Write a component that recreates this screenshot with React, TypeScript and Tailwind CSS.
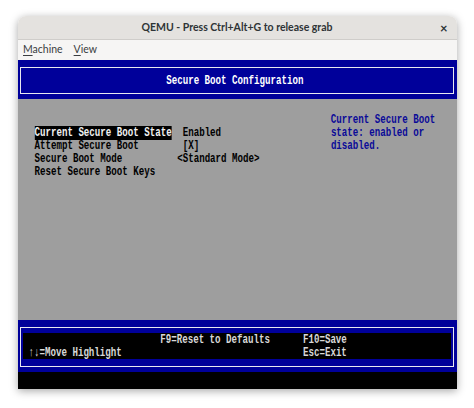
import React from "react";

type Seg = { col: number; text: string; cls?: string };

function Line({ segs, start = 0, tight = false }: { segs: Seg[]; start?: number; tight?: boolean }) {
  const out: React.ReactNode[] = [];
  let cur = start;
  segs.forEach((s, i) => {
    const gap = s.col - cur;
    if (gap > 0) out.push(<span key={"g" + i}>{" ".repeat(gap)}</span>);
    out.push(
      <span key={"s" + i} className={s.cls}>
        {s.text}
      </span>
    );
    cur = s.col + s.text.length;
  });
  return (
    <div className="h-[13.02px] flex">
      <div
        className={
          tight
            ? "w-max shrink-0 whitespace-pre origin-top-left scale-x-[0.7317] font-['Liberation_Mono',monospace] text-[12.5px] leading-[13.02px] font-bold pt-[1px]"
            : "w-max shrink-0 whitespace-pre origin-top-left scale-x-[0.7317] font-['Liberation_Mono',monospace] text-[12.5px] leading-[13.02px] font-bold pt-[2px]"
        }
      >
        {out.length ? out : " "}
      </div>
    </div>
  );
}

export default function App() {
  const body: Seg[][] = [
    [],
    [{ col: 57, text: "Current Secure Boot", cls: "text-[#0a0a98]" }],
    [
      { col: 3, text: "Current Secure Boot State", cls: "bg-black text-[#f0f0f0]" },
      { col: 30, text: "Enabled", cls: "text-black" },
      { col: 57, text: "state: enabled or", cls: "text-[#0a0a98]" },
    ],
    [
      { col: 3, text: "Attempt Secure Boot", cls: "text-black" },
      { col: 30, text: "[X]", cls: "text-black" },
      { col: 57, text: "disabled.", cls: "text-[#0a0a98]" },
    ],
    [
      { col: 3, text: "Secure Boot Mode", cls: "text-black" },
      { col: 29, text: "<Standard Mode>", cls: "text-black" },
    ],
    [{ col: 3, text: "Reset Secure Boot Keys", cls: "text-black" }],
  ];

  return (
    <div className="w-[474px] h-[408px] bg-white overflow-hidden pt-[16px] pl-[17.5px]">
      <div className="w-[439px] flex flex-col rounded-t-[8px] shadow-[0_2px_9px_rgba(0,0,0,0.35)] overflow-hidden">
        {/* Title bar */}
        <div className="h-[24px] bg-[#e4e2df] border-b border-[#cfcdca] flex items-center justify-center relative font-['Lato',sans-serif] text-[10.5px] font-bold text-[#2e3436]">
          <span>QEMU - Press Ctrl+Alt+G to release grab</span>
          <span className="absolute right-[9px] top-[3px] text-[13px] font-bold text-[#2e3436]">×</span>
        </div>
        {/* Menu bar */}
        <div className="h-[19.5px] bg-[#f6f5f4] flex items-center gap-[11px] pl-[5.5px] font-['Lato',sans-serif] text-[10.5px] text-[#3a3d3f]">
          <span>
            <span className="underline underline-offset-[2px]">M</span>achine
          </span>
          <span>
            <span className="underline underline-offset-[2px]">V</span>iew
          </span>
        </div>
        {/* Screen */}
        <div className="h-[329px] bg-black flex flex-col">
          {/* header */}
          <div className="h-[39.07px] bg-[#00009a] px-[2.2px] pt-[7px]">
            <div className="h-[27px] border border-[#e8e8f0] pt-[5px] overflow-hidden">
              <div className="-ml-[3.2px]">
                <Line segs={[{ col: 27, text: "Secure Boot Configuration", cls: "text-white" }]} />
              </div>
            </div>
          </div>
          {/* body */}
          <div className="h-[221.39px] bg-[#9e9e9e] overflow-hidden">
            {body.map((segs, i) => (
              <Line key={i} segs={segs} />
            ))}
          </div>
          {/* footer */}
          <div className="h-[52.09px] bg-[#00009a] px-[2.2px] pt-[7px]">
            <div className="h-[40px] border border-[#e8e8f0] pt-[5px] overflow-hidden">
              <div className="ml-[2.3px] w-[428px] h-[26.04px] bg-black">
                <Line
                  start={1}
                  tight
                  segs={[
                    { col: 26, text: "F9=Reset to Defaults", cls: "text-[#d8d8d8]" },
                    { col: 52, text: "F10=Save", cls: "text-[#d8d8d8]" },
                  ]}
                />
                <Line
                  start={1}
                  tight
                  segs={[
                    { col: 2, text: "↑↓=Move Highlight", cls: "text-[#d8d8d8]" },
                    { col: 52, text: "Esc=Exit", cls: "text-[#d8d8d8]" },
                  ]}
                />
              </div>
            </div>
          </div>
          <div className="flex-1 bg-black" />
        </div>
      </div>
    </div>
  );
}
